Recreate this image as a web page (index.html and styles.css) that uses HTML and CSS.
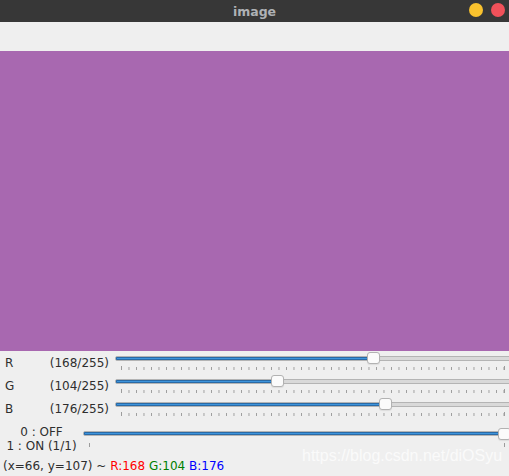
FILE: index.html
```html
<!DOCTYPE html>
<html lang="en">
<head>
    <meta charset="UTF-8">
    <meta name="viewport" content="width=device-width, initial-scale=1.0">
    <title>image</title>
    <link rel="stylesheet" href="styles.css">
</head>
<body>

    <div class="window">
        <div class="titlebar">
            <span></span>
            <span class="title">image</span>
            <div class="buttons">
                <span class="btn minimize"></span>
                <span class="btn close"></span>
            </div>
        </div>

        <div class="toolbar"></div>

        <div class="canvas"></div>

        <div class="trackbar">
            <div class="label"><span>R</span><span>(168/255)</span></div>
            <div class="slider" style="--p: 0.6588">
                <div class="groove"><div class="fill"></div></div>
                <div class="ticks"></div>
                <div class="handle"></div>
            </div>
        </div>

        <div class="trackbar">
            <div class="label"><span>G</span><span>(104/255)</span></div>
            <div class="slider" style="--p: 0.4078">
                <div class="groove"><div class="fill"></div></div>
                <div class="ticks"></div>
                <div class="handle"></div>
            </div>
        </div>

        <div class="trackbar">
            <div class="label"><span>B</span><span>(176/255)</span></div>
            <div class="slider" style="--p: 0.6902">
                <div class="groove"><div class="fill"></div></div>
                <div class="ticks"></div>
                <div class="handle"></div>
            </div>
        </div>

        <div class="trackbar switch">
            <div class="label">
                <span>0 : OFF</span>
                <span>1 : ON (1/1)</span>
            </div>
            <div class="slider" style="--p: 1">
                <div class="groove"><div class="fill"></div></div>
                <div class="ticks"></div>
                <div class="handle"></div>
            </div>
        </div>

        <div class="status">
            (x=66, y=107) ~ <span class="red">R:168</span> <span class="green">G:104</span> <span class="blue">B:176</span>
        </div>

        <div class="watermark">https://blog.csdn.net/diOSyu</div>
    </div>

</body>
</html>
```

FILE: styles.css
```css
body {
    margin: 0;
    background-color: #efefef;
    font-family: "DejaVu Sans", sans-serif;
    font-size: 12px;
    color: #2e2e2e;
    overflow: hidden;
}
.window {
    position: relative;
    width: 509px;
    height: 476px;
    display: flex;
    flex-direction: column;
    overflow: hidden;
}
.titlebar {
    height: 22px;
    background-color: #373737;
    display: grid;
    grid-template-columns: 1fr auto 1fr;
    align-items: center;
}
.title {
    color: #aeb1b5;
    font-weight: bold;
    font-size: 12.5px;
}
.buttons {
    display: flex;
    justify-content: flex-end;
    gap: 8px;
    padding-right: 4px;
    padding-bottom: 2px;
}
.btn {
    width: 14px;
    height: 14px;
    border-radius: 50%;
}
.minimize {
    background-color: #f9c22e;
}
.close {
    background-color: #f1515a;
}
.toolbar {
    height: 29px;
    background-color: #efefef;
}
.canvas {
    height: 300px;
    background-color: #a868b0;
}
.trackbar {
    height: 23px;
    display: flex;
}
.label {
    width: 115px;
    flex: none;
    box-sizing: border-box;
    padding: 0 6px 0 5px;
    display: flex;
    justify-content: space-between;
    align-items: center;
}
.slider {
    position: relative;
    flex: none;
    width: 396px;
}
.groove {
    margin-top: 5px;
    height: 3px;
    border: 1px solid #b4b4b4;
    border-radius: 2px;
    background-color: #d9d9d9;
    overflow: hidden;
}
.fill {
    height: 100%;
    width: calc((100% - 13px) * var(--p) + 6px);
    background-color: #3d94dc;
    box-shadow: inset 0 0 0 1px #2a6aa6;
}
.ticks {
    position: relative;
    margin: 6px 0 0 6px;
    width: 384px;
    height: 3px;
    background-image: linear-gradient(to right, #9c9c9c 1px, transparent 1px);
    background-size: calc(383px / 51) 3px;
    background-repeat: repeat-x;
}
.ticks::before,
.ticks::after {
    content: "";
    position: absolute;
    top: -1px;
    width: 1px;
    height: 4px;
    background-color: #9c9c9c;
}
.ticks::before {
    left: 0;
}
.ticks::after {
    right: 0;
}
.handle {
    position: absolute;
    top: 1px;
    left: calc((100% - 13px) * var(--p));
    width: 11px;
    height: 10px;
    border: 1px solid #b2b2b2;
    border-radius: 3px;
    background-color: #fbfbfb;
    box-shadow: 0 1px 1px rgba(0, 0, 0, 0.08);
}
.switch {
    height: 36px;
}
.switch .label {
    width: 83px;
    padding: 5px 0 0;
    flex-direction: column;
    justify-content: flex-start;
    line-height: 14px;
}
.switch .slider {
    width: 428px;
}
.switch .groove {
    margin-top: 11px;
}
.switch .ticks {
    width: 416px;
    margin-top: 8px;
    background-image: none;
}
.switch .handle {
    top: 8px;
}
.status {
    height: 20px;
    line-height: 20px;
    padding-left: 3px;
    white-space: nowrap;
}
.red {
    color: #ff0000;
}
.green {
    color: #008000;
}
.blue {
    color: #0000ff;
}
.watermark {
    position: absolute;
    left: 302px;
    top: 447px;
    font-family: "Liberation Sans", Arial, sans-serif;
    font-size: 16px;
    color: rgba(255, 255, 255, 0.7);
    white-space: nowrap;
}
```
